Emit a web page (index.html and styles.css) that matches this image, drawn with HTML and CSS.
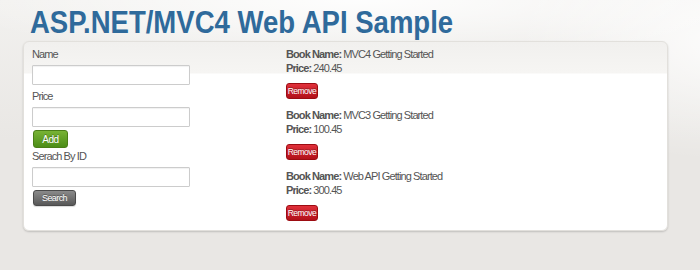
FILE: index.html
```html
<!DOCTYPE html>
<html lang="en">
<head>
    <meta charset="UTF-8">
    <title>ASP.NET/MVC4 Web API Sample</title>
    <link rel="stylesheet" href="styles.css">
</head>
<body>
    <header class="top">
        <h1 class="title">ASP.NET/MVC4 Web API Sample</h1>
    </header>

    <div class="panel">
        <div class="form">
            <label>Name</label>
            <input type="text" class="field">
            <label>Price</label>
            <input type="text" class="field">
            <button class="btn add">Add</button>
            <label>Serach By ID</label>
            <input type="text" class="field">
            <button class="btn search">Search</button>
        </div>

        <div class="books">
            <div class="book">
                <div><b>Book Name:</b> MVC4 Getting Started</div>
                <div><b>Price:</b> 240.45</div>
                <button class="btn remove">Remove</button>
            </div>
            <div class="book">
                <div><b>Book Name:</b> MVC3 Getting Started</div>
                <div><b>Price:</b> 100.45</div>
                <button class="btn remove">Remove</button>
            </div>
            <div class="book">
                <div><b>Book Name:</b> Web API Getting Started</div>
                <div><b>Price:</b> 300.45</div>
                <button class="btn remove">Remove</button>
            </div>
        </div>
    </div>
</body>
</html>
```

FILE: styles.css
```css
body {
    margin: 0;
    padding: 0;
    height: 270px;
    overflow: hidden;
    font-family: 'Liberation Sans', Arial, sans-serif;
    color: #555;
    background-color: #e9e7e4;
    background-image:
        radial-gradient(ellipse 420px 60px at 360px 0px, rgba(255,255,255,0.9), rgba(255,255,255,0) 100%),
        radial-gradient(ellipse 200px 120px at 720px 40px, rgba(255,255,255,0.8), rgba(255,255,255,0) 100%),
        linear-gradient(#f2f1ef, #e9e7e4 140px);
}

.top {
    height: 41px;
    padding-left: 30px;
}

.title {
    display: inline-block;
    margin: 0;
    padding-top: 3px;
    font-size: 32px;
    font-weight: bold;
    color: #2f6a9b;
    line-height: 38px;
    white-space: nowrap;
    transform: scaleX(0.86);
    transform-origin: left center;
}

.panel {
    margin-left: 23px;
    width: 645px;
    height: 190px;
    box-sizing: border-box;
    display: grid;
    grid-template-columns: 254px 1fr;
    padding: 4px 8px 0;
    background: linear-gradient(#f1f0ee, #f6f5f3 31px, #fff 32px);
    border: 1px solid #e2e0dc;
    border-radius: 6px;
    box-shadow: 0 1px 2px rgba(0, 0, 0, 0.18);
}

.form label {
    display: block;
    font-size: 11px;
    letter-spacing: -0.9px;
    line-height: 16px;
    margin-bottom: 3px;
}

.field {
    display: block;
    width: 158px;
    height: 20px;
    box-sizing: border-box;
    margin: 0 0 3px;
    border: 1px solid #ccc;
    border-radius: 1px;
    background: #fff;
    box-shadow: inset 0 1px 1px rgba(0, 0, 0, 0.06);
}

.btn {
    display: block;
    font-family: 'Liberation Sans', Arial, sans-serif;
    color: #fff;
    border-radius: 3px;
    padding: 0;
    cursor: pointer;
    text-shadow: 0 -1px 0 rgba(0, 0, 0, 0.3);
}

.add {
    margin: 1px 0 0 1px;
    width: 35px;
    height: 18px;
    font-size: 10px;
    letter-spacing: -0.5px;
    border: 1px solid #4a7e17;
    background: linear-gradient(#78b335, #4c8d17);
}

.search {
    margin-left: 1px;
    width: 43px;
    height: 16px;
    font-size: 9px;
    letter-spacing: -0.6px;
    border: 1px solid #4a4a4a;
    background: linear-gradient(#8a8a8a, #585858);
    box-shadow: 0 1px 1px rgba(0, 0, 0, 0.15);
}

.books {
    padding-top: 1px;
    font-size: 11px;
    letter-spacing: -0.9px;
    line-height: 14px;
}

.book b {
    font-weight: bold;
}

.remove {
    margin: 8px 0 9px;
    width: 32px;
    height: 16px;
    font-size: 8.5px;
    letter-spacing: -0.5px;
    border: 1px solid #9c0c12;
    background: linear-gradient(#e0303a, #b2111a);
}
```
